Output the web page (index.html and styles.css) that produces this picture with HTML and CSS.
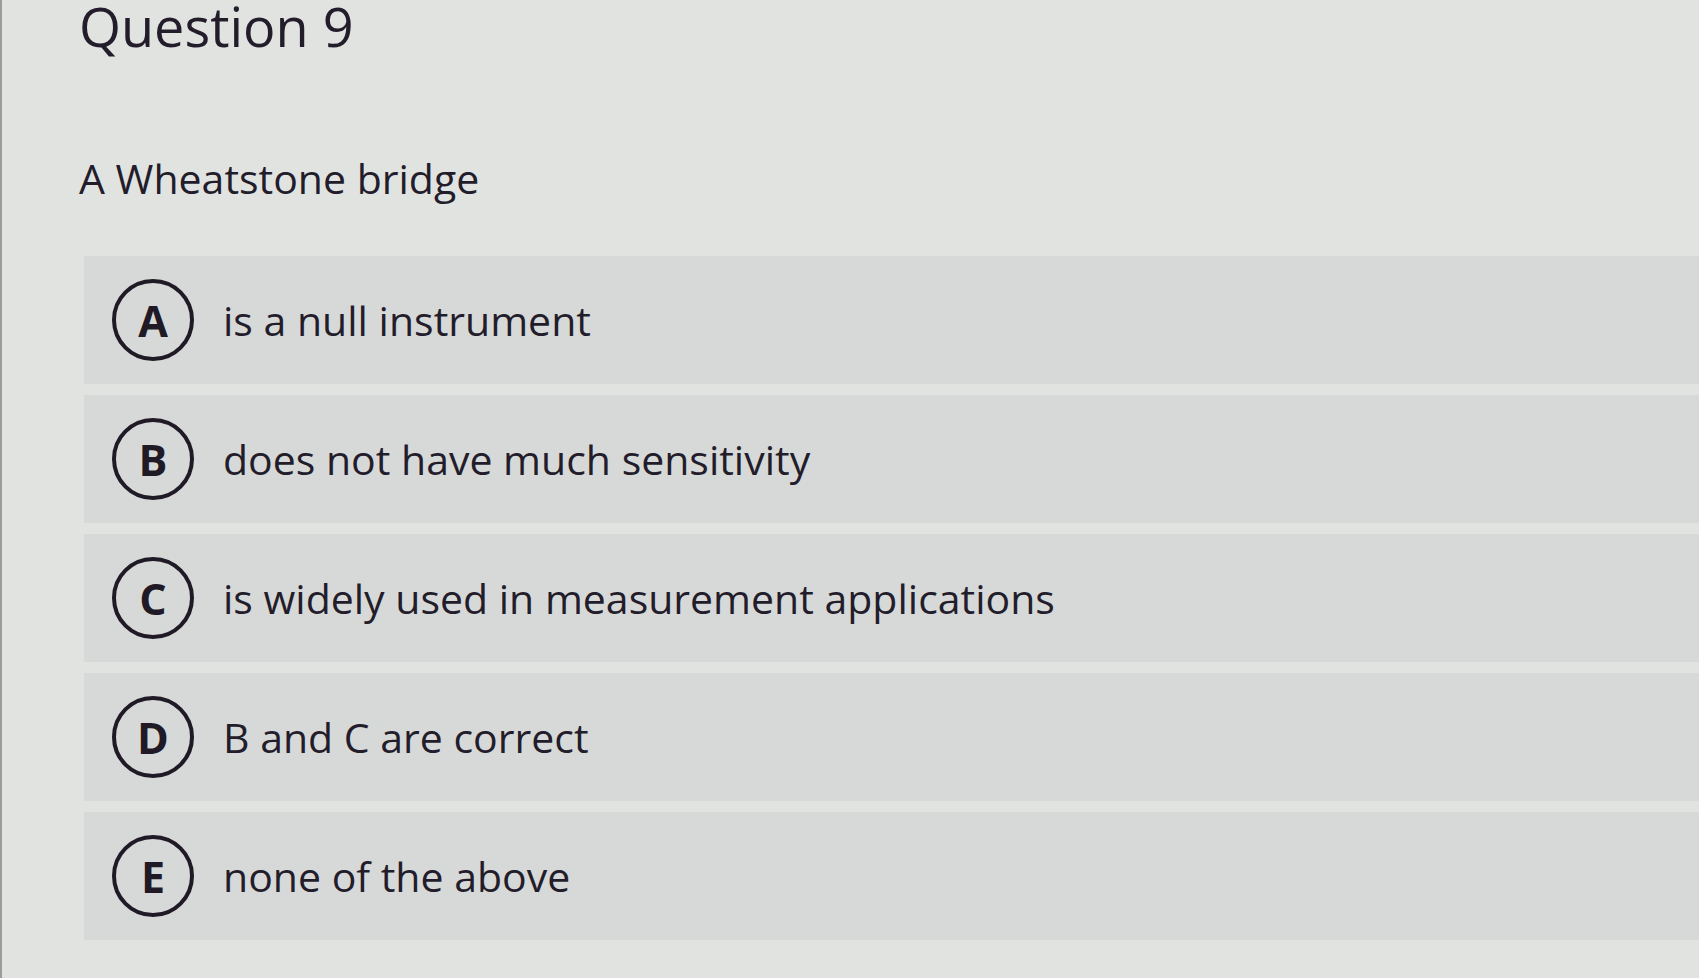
FILE: index.html
```html
<!DOCTYPE html>
<html lang="en">
<head>
<meta charset="utf-8">
<title>Question 9</title>
<link rel="stylesheet" href="styles.css">
</head>
<body>
<main class="page">
  <h1 class="title">Question 9</h1>
  <p class="stem">A Wheatstone bridge</p>
  <ul class="options">
    <li class="option"><span class="badge">A</span><span class="label">is a null instrument</span></li>
    <li class="option"><span class="badge">B</span><span class="label">does not have much sensitivity</span></li>
    <li class="option"><span class="badge">C</span><span class="label">is widely used in measurement applications</span></li>
    <li class="option"><span class="badge">D</span><span class="label">B and C are correct</span></li>
    <li class="option"><span class="badge">E</span><span class="label">none of the above</span></li>
  </ul>
</main>
</body>
</html>
```
FILE: styles.css
```css
html, body {
  margin: 0;
  padding: 0;
  height: 100%;
}
body {
  background: #e1e3e1;
  font-family: "Open Sans", "Noto Sans", sans-serif;
  color: #231d2b;
  overflow: hidden;
  border-left: 2px solid #9a9c9a;
  box-sizing: border-box;
}
.page {
  padding-left: 77px;
  padding-top: 0;
}
.title {
  margin: 0;
  font-size: 54px;
  line-height: 52px;
  font-weight: 500;
}
.stem {
  margin: 102px 0 0;
  font-size: 41px;
  line-height: 48px;
}
.options {
  list-style: none;
  margin: 54px 0 0;
  padding: 0 0 0 5px;
  display: flex;
  flex-direction: column;
  gap: 11px;
}
.option {
  height: 128px;
  background: #d7d9d8;
  display: flex;
  align-items: center;
  padding-left: 28px;
  gap: 29px;
}
.badge {
  width: 82px;
  height: 82px;
  box-sizing: border-box;
  border: 4px solid #1f1a25;
  border-radius: 50%;
  display: flex;
  align-items: center;
  justify-content: center;
  font-size: 43px;
  font-weight: 700;
  flex: none;
  color: #1f1a25;
}
.label {
  font-size: 41px;
  line-height: 48px;
}
```
